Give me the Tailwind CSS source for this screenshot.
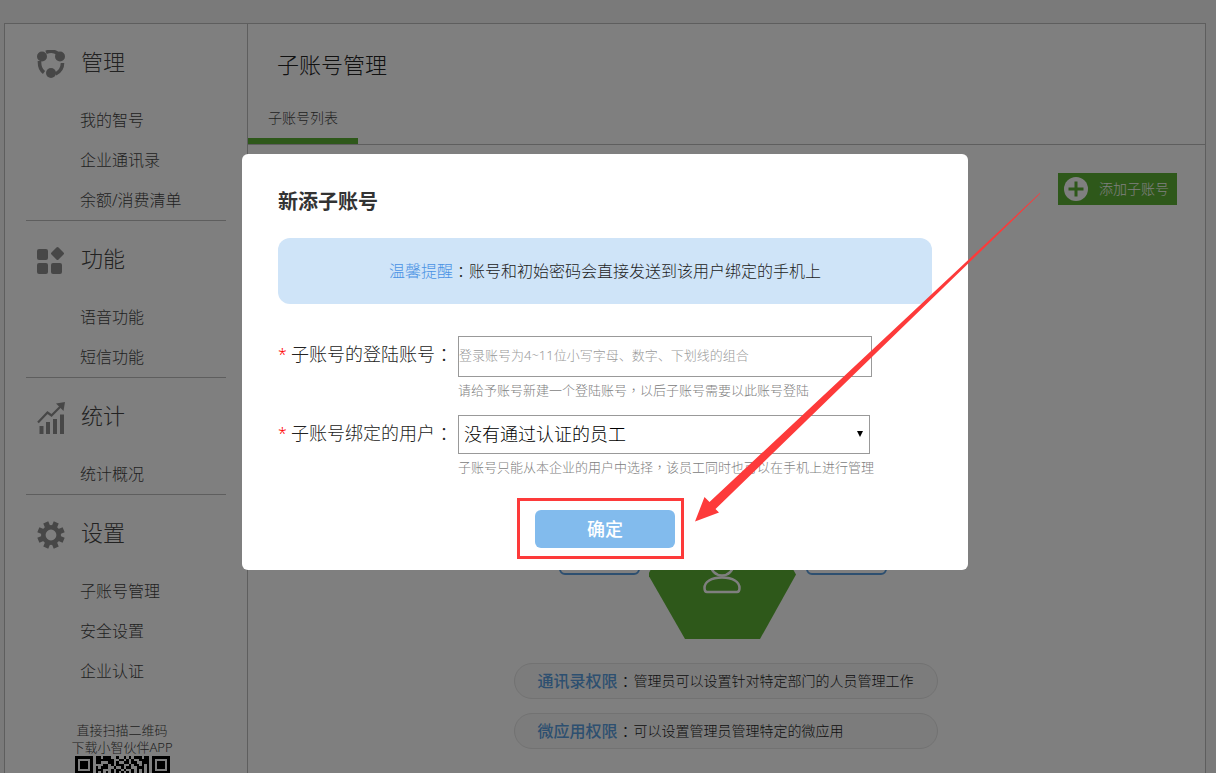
<!DOCTYPE html>
<html lang="zh-CN">
<head>
  <meta charset="UTF-8" />
  <meta name="viewport" content="width=device-width, initial-scale=1.0" />
  <title>子账号管理</title>
  <script src="https://cdn.jsdelivr.net/npm/@tailwindcss/browser@4"></script>
</head>
<body class="h-screen overflow-hidden bg-[#f4f4f4] font-['Noto_Sans','Noto_Sans_CJK_SC',sans-serif] font-light text-[#222]">
  <!-- Page -->
  <div class="mt-[23px] mr-[10px] ml-1 flex min-h-screen border border-[#bdbdbd] bg-white">
    <!-- Sidebar -->
    <aside class="w-[243px] shrink-0 border-r border-[#bdbdbd] text-[#444]">
      <nav class="mr-[21px] ml-[21px]">
        <section class="border-b border-[#bdbdbd]">
          <h2 class="flex h-[76px] items-center pb-[2px] pl-[11px] text-[22px]">
            <svg class="mt-[5px] mr-4 h-7 w-7 text-[#8f8f8f]" viewBox="0 0 28 28" fill="currentColor">
              <path d="M9 2.400C12.500 1 17.500 1.200 20.500 3.200M25.500 13C25.500 18 22.500 22 18.500 24M7 22.500C3.500 20 2.300 16 2.500 11" fill="none" stroke="currentColor" stroke-width="3.600" />
              <circle cx="5" cy="6.500" r="5" />
              <circle cx="23" cy="6.500" r="5" />
              <circle cx="14" cy="23" r="5" />
            </svg>
            管理
          </h2>
          <ul class="pl-[54px] text-base leading-10">
            <li><a href="#">我的智号</a></li>
            <li><a href="#">企业通讯录</a></li>
            <li><a href="#">余额/消费清单</a></li>
          </ul>
        </section>

        <section class="border-b border-[#bdbdbd]">
          <h2 class="flex h-[76px] items-center pb-[2px] pl-[11px] text-[22px]">
            <svg class="mt-[3px] mr-4 h-7 w-7 text-[#8f8f8f]" viewBox="0 0 28 28" fill="currentColor">
              <rect x="0" y="3" width="11" height="11" rx="2" />
              <rect x="0" y="17" width="11" height="11" rx="2" />
              <rect x="14" y="17" width="11" height="11" rx="2" />
              <rect x="15.500" y="2.500" width="10" height="10" rx="1.500" transform="rotate(45 20.500 7.500)" />
            </svg>
            功能
          </h2>
          <ul class="pl-[54px] text-base leading-10">
            <li><a href="#">语音功能</a></li>
            <li><a href="#">短信功能</a></li>
          </ul>
        </section>

        <section class="border-b border-[#bdbdbd]">
          <h2 class="flex h-[76px] items-center pb-[2px] pl-[11px] text-[22px]">
            <svg class="mt-[5px] mr-4 h-8 w-7 text-[#8f8f8f]" viewBox="0 0 28 32" fill="currentColor">
              <path d="M1 20.500L10.500 10.500L14.500 13.500L24 4" fill="none" stroke="currentColor" stroke-width="2.200" />
              <path d="M28 0L26.500 9L19 1.500Z" />
              <path d="M2.500 24H6.500V32H2.500ZM9 20H13V32H9ZM16 17H20V32H16ZM23 12.500H27V32H23Z" />
            </svg>
            统计
          </h2>
          <ul class="pl-[54px] text-base leading-10">
            <li><a href="#">统计概况</a></li>
          </ul>
        </section>

        <section>
          <h2 class="flex h-[76px] items-center pb-[2px] pl-[11px] text-[22px]">
            <svg class="mt-[5px] mr-4 h-7 w-7 text-[#8f8f8f]" viewBox="0 0 28 28" fill="none" stroke="currentColor">
              <circle cx="14" cy="14" r="7.700" stroke-width="4.600" />
              <g stroke-width="5.400" transform="rotate(22.500 14 14)">
                <path d="M14 0.300V5.500M14 22.500V27.700M0.300 14H5.500M22.500 14H27.700" />
                <path d="M14 0.300V5.500M14 22.500V27.700M0.300 14H5.500M22.500 14H27.700" transform="rotate(45 14 14)" />
              </g>
            </svg>
            设置
          </h2>
          <ul class="pl-[54px] text-base leading-10">
            <li><a href="#">子账号管理</a></li>
            <li><a href="#">安全设置</a></li>
            <li><a href="#">企业认证</a></li>
          </ul>
        </section>
      </nav>

      <!-- App download -->
      <div class="mt-[31px] mr-2 flex flex-col items-center text-[13px] leading-[17px]">
        <p>直接扫描二维码</p>
        <p>下载小智伙伴APP</p>
        <svg id="qrCode" class="h-[95px] w-[95px] text-black" viewBox="0 0 37 37" fill="currentColor" shape-rendering="crispEdges"></svg>
      </div>
    </aside>

    <!-- Content -->
    <main class="flex-1">
      <header class="border-b border-[#bdbdbd]">
        <h1 class="pt-[22px] pl-[29px] text-[22px] leading-9">子账号管理</h1>
        <div class="mt-3 flex">
          <a href="#" class="border-b-6 border-[#5cb034] px-5 pt-[10px] pb-[6px] text-sm leading-7 text-[#444]">子账号列表</a>
        </div>
      </header>

      <div class="flex justify-end pt-7 pr-7">
        <button class="flex h-8 w-[119px] items-center bg-[#5cb034] pl-[6px] text-sm text-white">
          <svg class="mr-[11px] h-6 w-6" viewBox="0 0 24 24">
            <circle cx="12" cy="12" r="12" fill="#fff" />
            <path d="M12 4.500V19.500M4.500 12H19.500" stroke="#5cb034" stroke-width="3" />
          </svg>
          添加子账号
        </button>
      </div>

      <!-- Roles diagram -->
      <div class="mt-[305px] flex items-start justify-center gap-[9px] pr-2">
        <div class="h-[65px] w-[81px] rounded-md border-2 border-[#5a9fe0]"></div>
        <svg class="h-[129px] w-[148px]" viewBox="0 0 148 129">
          <path d="M36 0H110L147 64.500L111 129H36L-1 64.500Z" fill="#5cb034" />
          <g fill="none" stroke="#fff" stroke-width="2.500">
            <circle cx="73" cy="54" r="11.500" />
            <path d="M55.500 78C55.500 72 62 67.500 73 67.500S90.500 72 90.500 78Q90.500 82 88 82H58Q55.500 82 55.500 78Z" />
          </g>
        </svg>
        <div class="h-[65px] w-[81px] rounded-md border-2 border-[#5a9fe0]"></div>
      </div>

      <div class="mt-6 flex flex-col items-center gap-[14px] pr-[2px] text-sm">
        <p class="flex h-9 w-[424px] items-center rounded-full border border-[#e4e4e4] bg-[#f8f8f8] pl-[23px]">
          <strong class="text-base font-medium text-[#5a9fe0]">通讯录权限</strong><span lang="zh-TW" class="font-['Noto_Sans_CJK_TC'] text-base">：</span>管理员可以设置针对特定部门的人员管理工作
        </p>
        <p class="flex h-9 w-[424px] items-center rounded-full border border-[#e4e4e4] bg-[#f8f8f8] pl-[23px]">
          <strong class="text-base font-medium text-[#5a9fe0]">微应用权限</strong><span lang="zh-TW" class="font-['Noto_Sans_CJK_TC'] text-base">：</span>可以设置管理员管理特定的微应用
        </p>
      </div>
    </main>
  </div>

  <!-- Modal -->
  <div class="fixed inset-0 flex items-start justify-center bg-black/50 pt-[154px] pr-[6px]">
    <form class="relative w-[726px] rounded-md bg-white px-9 pt-[34px] pb-[22px]">
      <h3 class="text-xl leading-7 font-bold text-[#333]">新添子账号</h3>

      <div class="mt-[22px] flex h-[66px] items-center justify-center rounded-xl bg-[#cfe4f8] text-base">
        <span class="text-[#4a92e4]">温馨提醒</span><span lang="zh-TW" class="font-['Noto_Sans_CJK_TC']">：</span>账号和初始密码会直接发送到该用户绑定的手机上
      </div>

      <div class="mt-8 grid grid-cols-[180px_1fr] gap-y-3">
        <label for="loginName" class="flex h-9 items-center text-lg whitespace-nowrap">
          <span class="w-[13px] text-base text-[#f00]">*</span>子账号的登陆账号<span lang="zh-TW" class="font-['Noto_Sans_CJK_TC']">：</span>
        </label>
        <div>
          <input id="loginName" type="text" placeholder="登录账号为4~11位小写字母、数字、下划线的组合" class="block h-[41px] w-[414px] border border-[#999] pb-1 text-[13px] placeholder:text-[#999] focus:outline-none" />
          <p class="text-[13px] leading-[26px] whitespace-nowrap text-[#808080]">请给予账号新建一个登陆账号<span lang="zh-TW" class="font-['Noto_Sans_CJK_TC']">，</span>以后子账号需要以此账号登陆</p>
        </div>

        <label for="bindUser" class="flex h-9 items-center text-lg whitespace-nowrap">
          <span class="w-[13px] text-base text-[#f00]">*</span>子账号绑定的用户<span lang="zh-TW" class="font-['Noto_Sans_CJK_TC']">：</span>
        </label>
        <div>
          <div class="relative w-[412px]">
            <select id="bindUser" class="block h-[39px] w-full appearance-none border border-[#999] bg-white pb-[2px] pl-[5px] text-lg text-black focus:outline-none">
              <option>没有通过认证的员工</option>
            </select>
            <svg class="pointer-events-none absolute top-4 right-[7px] h-[6px] w-[6px]" viewBox="0 0 6 6"><path d="M0 0H6L3 6Z" /></svg>
          </div>
          <p class="text-[13px] leading-[26px] whitespace-nowrap text-[#808080]">子账号只能从本企业的用户中选择<span lang="zh-TW" class="font-['Noto_Sans_CJK_TC']">，</span>该员工同时也可以在手机上进行管理</p>
        </div>
      </div>

      <div class="relative mx-auto mt-[30px] w-[140px]">
        <button type="button" class="h-[38px] w-full rounded-md bg-[#82bbed] text-lg font-medium text-white">确定</button>
        <div class="pointer-events-none absolute -top-3 -left-[18px] h-[61px] w-[167px] border-3 border-[#fd3a3a]"></div>
      </div>

      <!-- Arrow from the add button to the confirm button -->
      <svg class="pointer-events-none absolute top-[39px] left-[453px] h-[329px] w-[346px]" viewBox="0 0 346 329" fill="#fd3a3a">
        <path d="M0 328.500L9.500 304L14.500 309L344.800 0L345.300 0.500L20.500 316L24 319.500Z" />
      </svg>
    </form>
  </div>

  <script>
    // Rows of the QR code, one character per module
    const qrRows = [
      "#######.##.###..#..#.#.###.##.#######",
      "#.....#.#######..##.#.#..####.#.....#",
      "#.###.#.##...##.#..##.##..###.#.###.#",
      "#.###.#....##.#.###..#.##.#.#.#.###.#",
      "#.###.#.#.###..#..#.##..###.#.#.###.#",
      "#.....#.###...#.##.#..#.#.#.#.#.....#",
      "#######.#.#.#.#.#.#.#.#.#.#.#.#######",
      "........##..##.#.##..#.##..##........",
    ];

    let path = "";
    qrRows.forEach((row, y) => {
      [...row].forEach((cell, x) => {
        if (cell === "#") path += `M${x} ${y}h1v1h-1z`;
      });
    });
    document.getElementById("qrCode").innerHTML = `<path d="${path}" />`;
  </script>
</body>
</html>
